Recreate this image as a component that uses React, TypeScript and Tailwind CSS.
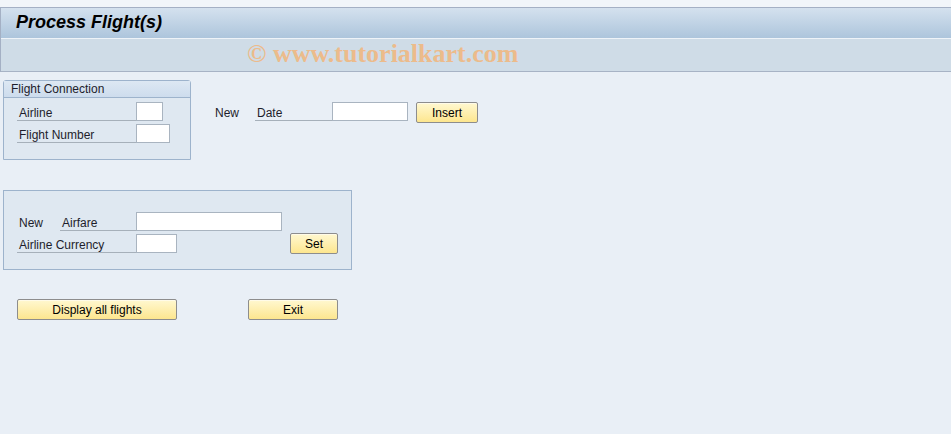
import React from 'react';

const font = { fontFamily: '"Liberation Sans", Arial, sans-serif' };

const Btn: React.FC<{ label: string; className?: string }> = ({ label, className = '' }) => (
  <button
    className={`h-[21px] rounded-[2px] border border-[#8d8d8d] bg-gradient-to-b from-[#fff8d0] to-[#fde68e] pt-[1px] text-[12px] leading-[18px] text-black shadow-[inset_0_1px_0_#fffbe8] ${className}`}
  >
    {label}
  </button>
);

const Field: React.FC<{ className?: string }> = ({ className = '' }) => (
  <div className={`h-[19px] border border-[#a9b4c0] bg-white ${className}`} />
);

const Label: React.FC<{ text: string; className?: string }> = ({ text, className = '' }) => (
  <div className={`h-[19px] border-b border-[#a6b0ba] pl-[2px] pt-[3px] text-[12px] leading-[16px] text-[#1d1d2b] ${className}`}>
    {text}
  </div>
);

export default function App() {
  return (
    <div style={font} className="h-[434px] w-[951px] overflow-hidden bg-[#e9eff6]">
      {/* header */}
      <div className="h-[7px] bg-[#f1f5f9]" />
      <div className="border-l border-t border-[#a4b0c4]">
        <div className="flex h-[30px] items-center bg-gradient-to-b from-[#d4e1ee] to-[#adc5dc] pl-[15px]">
          <span className="-mt-[2px] text-[18px] font-bold italic text-black">Process Flight(s)</span>
        </div>
        <div className="flex h-[34px] items-center border-t border-[#eef3f8] border-b border-b-[#a7b3c5] bg-[#cfdce7] pl-[246px]">
          <span
            className="-mt-[4px] text-[26px] font-bold text-[#ecbb8b]"
            style={{ fontFamily: '"Liberation Serif", "Times New Roman", serif' }}
          >
            © www.tutorialkart.com
          </span>
        </div>
      </div>

      {/* first row: flight connection + date */}
      <div className="flex items-start pt-[8px] pl-[3px]">
        <div className="w-[188px] h-[80px] rounded-t-[3px] border border-[#9db3cc] bg-[#dfe8f1]">
          <div className="h-[17px] border-b border-[#9db3cc] bg-gradient-to-b from-[#dde8f3] to-[#cddced] pl-[7px] text-[12px] leading-[16px] text-[#1d1d2b]">
            Flight Connection
          </div>
          <div className="flex flex-col gap-[3px] pt-[4px] pl-[13px]">
            <div className="flex">
              <Label text="Airline" className="w-[119px]" />
              <Field className="w-[27px]" />
            </div>
            <div className="flex">
              <Label text="Flight Number" className="w-[119px]" />
              <Field className="w-[34px]" />
            </div>
          </div>
        </div>
        <div className="ml-[24px] mt-[22px] flex items-start">
          <div className="h-[19px] w-[40px] pt-[3px] text-[12px] leading-[16px] text-[#1d1d2b]">New</div>
          <Label text="Date" className="w-[77px]" />
          <Field className="w-[76px]" />
          <Btn label="Insert" className="ml-[8px] w-[62px]" />
        </div>
      </div>

      {/* airfare box */}
      <div className="mt-[30px] ml-[3px] h-[80px] w-[349px] border border-[#9db3cc] bg-[#dfe8f1] pt-[21px] pl-[13px]">
        <div className="flex">
          <div className="h-[19px] w-[43px] pl-[2px] pt-[3px] text-[12px] leading-[16px] text-[#1d1d2b]">New</div>
          <Label text="Airfare" className="w-[76px]" />
          <Field className="w-[146px]" />
        </div>
        <div className="mt-[3px] flex items-start">
          <Label text="Airline Currency" className="w-[119px]" />
          <Field className="w-[41px]" />
          <Btn label="Set" className="ml-[113px] -mt-[1px] w-[48px]" />
        </div>
      </div>

      {/* action buttons */}
      <div className="mt-[29px] flex pl-[17px]">
        <Btn label="Display all flights" className="w-[160px]" />
        <Btn label="Exit" className="ml-[71px] w-[90px]" />
      </div>
    </div>
  );
}
